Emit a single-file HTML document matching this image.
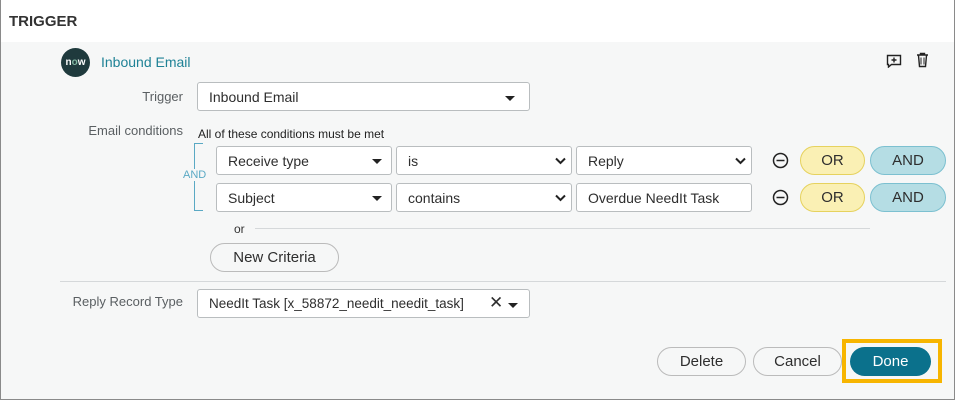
<!DOCTYPE html>
<html><head><style>
*{box-sizing:border-box;margin:0;padding:0}
body{width:956px;height:401px;font-family:"Liberation Sans",sans-serif;background:#fff;position:relative;overflow:hidden;color:#2e2e2e}
.frame{position:absolute;left:0;top:0;width:955px;height:400px;border:1px solid #8a8a8a;border-top:none;background:#f6f7f7}
.hdr{position:absolute;left:1px;top:0;width:953px;height:42px;background:#fff}
.a{position:absolute}
.box{position:absolute;background:#fff;border:1px solid #b9bdbf;border-radius:3px;font-size:14px;padding-left:11px;display:flex;align-items:center}
.lbl{position:absolute;font-size:13px;color:#5a5f62;text-align:right}
.pill{position:absolute;border-radius:16px;font-size:15px;display:flex;align-items:center;justify-content:center}
.caret{position:absolute;width:0;height:0;border-left:5px solid transparent;border-right:5px solid transparent;border-top:5px solid #222}
.chev{position:absolute;left:158px;top:10px}
</style></head><body>
<div class="frame"></div>
<div class="hdr"></div>
<div class="a" style="left:9px;top:13px;font-size:15px;font-weight:bold;color:#333">TRIGGER</div>
<div class="a" style="left:61px;top:48px;width:29px;height:29px;border-radius:50%;background:#1f3a3d;color:#fff;font-size:10px;font-weight:bold;display:flex;align-items:center;justify-content:center">n<span style="color:#81b5a1">o</span>w</div>
<div class="a" style="left:101px;top:54px;font-size:14px;color:#1f8296">Inbound Email</div>
<svg class="a" style="left:886px;top:54px" width="16" height="14" viewBox="0 0 16 14"><path d="M1.5 1.5h13v9h-9l-3 2.5v-2.5h-1z" fill="none" stroke="#222" stroke-width="1.4"/><path d="M8 3.5v5M5.5 6h5" stroke="#222" stroke-width="1.4"/></svg>
<svg class="a" style="left:916px;top:52px" width="13" height="16" viewBox="0 0 13 16"><path d="M1 3h11M4.5 3V1.5h4V3M2.5 3.5l1 11h6l1-11" fill="none" stroke="#222" stroke-width="1.4"/><path d="M5 5.5v7M8 5.5v7" stroke="#222" stroke-width="1"/></svg>
<div class="lbl" style="left:100px;top:89px;width:83px">Trigger</div>
<div class="box" style="left:197px;top:82px;width:333px;height:29px">Inbound Email<div class="caret" style="left:307px;top:13px"></div></div>
<div class="lbl" style="left:60px;top:123px;width:123px">Email conditions</div>
<div class="a" style="left:198px;top:127px;font-size:12px;color:#222">All of these conditions must be met</div>
<div class="a" style="left:194px;top:143px;width:9px;height:68px;border:1.5px solid #5aa9c4;border-right:none"></div>
<div class="a" style="left:183px;top:169px;font-size:11px;color:#5aa9c4;background:#f6f7f7">AND</div>
<div class="box" style="left:216px;top:146px;width:176px;height:29px">Receive type<div class="caret" style="left:155px;top:12px"></div></div>
<div class="box" style="left:396px;top:146px;width:176px;height:29px">is<svg class="chev" width="11" height="8"><path d="M1 1.5l4.5 4.5 4.5-4.5" fill="none" stroke="#222" stroke-width="2"/></svg></div>
<div class="box" style="left:576px;top:146px;width:176px;height:29px">Reply<svg class="chev" width="11" height="8"><path d="M1 1.5l4.5 4.5 4.5-4.5" fill="none" stroke="#222" stroke-width="2"/></svg></div>
<div class="box" style="left:216px;top:183px;width:176px;height:29px">Subject<div class="caret" style="left:155px;top:12px"></div></div>
<div class="box" style="left:396px;top:183px;width:176px;height:29px">contains<svg class="chev" width="11" height="8"><path d="M1 1.5l4.5 4.5 4.5-4.5" fill="none" stroke="#222" stroke-width="2"/></svg></div>
<div class="box" style="left:576px;top:183px;width:176px;height:29px">Overdue NeedIt Task</div>
<svg class="a" style="left:772px;top:152px" width="17" height="17"><circle cx="8.5" cy="8.5" r="7" fill="none" stroke="#222" stroke-width="1.5"/><path d="M4.5 8.5h8" stroke="#222" stroke-width="1.5"/></svg>
<svg class="a" style="left:772px;top:189px" width="17" height="17"><circle cx="8.5" cy="8.5" r="7" fill="none" stroke="#222" stroke-width="1.5"/><path d="M4.5 8.5h8" stroke="#222" stroke-width="1.5"/></svg>
<div class="pill" style="left:800px;top:146px;width:65px;height:29px;background:#faf0b4;border:1px solid #e6d25e">OR</div>
<div class="pill" style="left:870px;top:146px;width:76px;height:29px;background:#b5dde4;border:1px solid #7cc0d0">AND</div>
<div class="pill" style="left:800px;top:183px;width:65px;height:29px;background:#faf0b4;border:1px solid #e6d25e">OR</div>
<div class="pill" style="left:870px;top:183px;width:76px;height:29px;background:#b5dde4;border:1px solid #7cc0d0">AND</div>
<div class="a" style="left:234px;top:222px;font-size:12px;color:#333">or</div>
<div class="a" style="left:255px;top:228px;width:615px;height:1px;background:#d5d8da"></div>
<div class="pill" style="left:210px;top:243px;width:129px;height:29px;border:1px solid #bbb;background:#f6f7f7">New Criteria</div>
<div class="a" style="left:60px;top:281px;width:886px;height:1px;background:#d5d8da"></div>
<div class="lbl" style="left:40px;top:294px;width:143px">Reply Record Type</div>
<div class="box" style="left:197px;top:289px;width:333px;height:29px;font-size:13.5px">NeedIt Task [x_58872_needit_needit_task]<span class="a" style="left:291px;top:3px;font-size:17px">✕</span><div class="caret" style="left:310px;top:13px"></div></div>
<div class="pill" style="left:657px;top:347px;width:89px;height:29px;border:1px solid #bbb;background:#f6f7f7">Delete</div>
<div class="pill" style="left:753px;top:347px;width:89px;height:29px;border:1px solid #bbb;background:#f6f7f7">Cancel</div>
<div class="a" style="left:842px;top:339px;width:100px;height:44px;border:4px solid #f7b500"></div>
<div class="pill" style="left:850px;top:347px;width:81px;height:29px;background:#0b718c;color:#fff">Done</div>
</body></html>
